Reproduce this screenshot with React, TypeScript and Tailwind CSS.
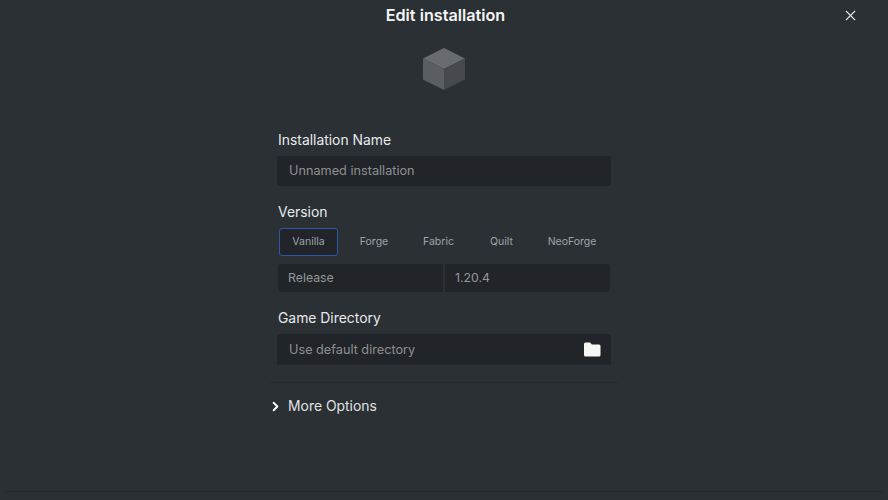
import { X, ChevronRight } from "lucide-react";

const TABS = ["Vanilla", "Forge", "Fabric", "Quilt", "NeoForge"];

const CubeIcon = () => (
  <svg width="44" height="44" viewBox="0 0 44 44" className="block">
    <path d="M22 1 L43 11.5 L22 22 L1 11.5 Z" fill="#686c71" />
    <path d="M1 11.5 L22 22 L22 43 L1 32.5 Z" fill="#5a5e63" />
    <path d="M43 11.5 L22 22 L22 43 L43 32.5 Z" fill="#46494e" />
  </svg>
);

const FolderIcon = () => (
  <svg width="18" height="15" viewBox="0 0 18 15" className="block">
    <path d="M1 2 Q1 0.5 2.5 0.5 H7 L9 2.5 H16 Q17.5 2.5 17.5 4 V13 Q17.5 14.5 16 14.5 H2.5 Q1 14.5 1 13 Z" fill="#f6f6f6" />
  </svg>
);

export default function App() {
  return (
    <div
      className="w-[888px] h-[500px] overflow-hidden bg-[#2b3035] flex flex-col items-center text-white"
      style={{ fontFamily: "Inter, sans-serif" }}
    >
      <div className="w-full h-[30px] shrink-0 pl-[3px] flex items-center justify-center relative">
        <h1 className="text-[16.2px] font-semibold text-[#f4f5f5]">Edit installation</h1>
        <button className="absolute left-[842px] top-[7px] text-[#e4e5e6]">
          <X size={17} strokeWidth={1.6} />
        </button>
      </div>

      <div className="mt-[17px] shrink-0">
        <CubeIcon />
      </div>

      <div className="w-[348px] mt-[38px] flex flex-col flex-1">
        <div className="px-[7px] flex flex-col">
          <label className="pl-[1px] text-[13.9px] leading-[22px] text-[#e8e9ea]">Installation Name</label>
          <div className="mt-[5px] h-[30px] rounded-[3px] bg-[#212428] px-[12px] flex items-center text-[12.7px] text-[#8d9093]">
            Unnamed installation
          </div>

          <label className="mt-[15px] pl-[1px] text-[13.9px] leading-[22px] text-[#e8e9ea]">Version</label>
          <div className="mt-[5px] ml-[2px] flex items-center text-[10.5px] text-[#a0a3a6]">
            <div className="w-[59px] h-[28px] rounded-[3px] border-[1.5px] border-[#2d55a8] bg-[#212428] flex items-center justify-center">
              Vanilla
            </div>
            {TABS.slice(1).map((t) => (
              <div
                key={t}
                className={`h-[28px] flex items-center justify-center ${
                  t === "Forge" ? "w-[72px]" : t === "Fabric" ? "w-[57px]" : t === "Quilt" ? "w-[69px]" : "w-[72px]"
                }`}
              >
                {t}
              </div>
            ))}
          </div>
          <div className="mt-[8px] mx-[1px] h-[28px] flex gap-[2px] text-[12.3px] text-[#94979a]">
            <div className="flex-1 rounded-l-[3px] bg-[#212428] px-[10px] flex items-center">Release</div>
            <div className="flex-1 rounded-r-[3px] bg-[#212428] px-[10px] flex items-center">1.20.4</div>
          </div>

          <label className="mt-[15px] pl-[1px] text-[13.9px] leading-[22px] text-[#e8e9ea]">Game Directory</label>
          <div className="mt-[5px] h-[31px] rounded-[3px] bg-[#212428] pl-[12px] pr-[10px] flex items-center justify-between text-[12.7px] text-[#8d9093]">
            <span>Use default directory</span>
            <FolderIcon />
          </div>
        </div>

        <div className="mt-[17px] border-t border-[#25282c]" />

        <div className="mt-[12px] flex items-center h-[22px] text-[13.9px] text-[#e0e1e2]">
          <ChevronRight size={15} strokeWidth={3} className="text-white -ml-[2px] shrink-0" />
          <span className="ml-[5px]">More Options</span>
        </div>
      </div>

      <div className="mx-[5px] mb-[8px] w-[878px] border-t border-[#25282c]" />
    </div>
  );
}
